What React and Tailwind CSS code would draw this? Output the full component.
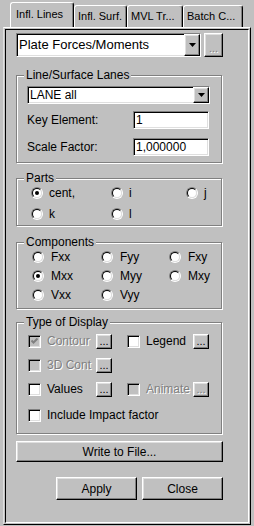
import React from 'react'

const raised =
  'border border-t-white border-l-white border-r-black border-b-black shadow-[inset_-1px_-1px_#808080,inset_1px_1px_#dfdfdf]'
const sunken =
  'border border-t-[#808080] border-l-[#808080] border-r-white border-b-white shadow-[inset_1px_1px_#000,inset_-1px_-1px_#dfdfdf]'
const grayText = 'text-[#808080] [text-shadow:1px_1px_0_#fff]'

function Group({ title, className = '', children }) {
  return (
    <div className={`relative w-[206px] border border-[#808080] shadow-[inset_1px_1px_#fff,1px_1px_#fff] ${className}`}>
      <span className="absolute -top-[8px] left-[7px] bg-[#c0c0c0] px-[2px] leading-[15px]">{title}</span>
      {children}
    </div>
  )
}

function Arrow() {
  return (
    <span className={`flex h-full w-[16px] shrink-0 items-center justify-center bg-[#c0c0c0] ${raised}`}>
      <svg width="7" height="4" viewBox="0 0 7 4">
        <path d="M0 0h7L3.5 4z" fill="#000" />
      </svg>
    </span>
  )
}

function Combo({ text, className }) {
  return (
    <div className={`flex items-stretch bg-white ${sunken} ${className}`}>
      <span className="flex flex-1 items-center pl-[2px]">{text}</span>
      <Arrow />
    </div>
  )
}

function Radio({ checked }) {
  return (
    <span className="block h-[12px] w-[12px] shrink-0 rounded-full border border-t-[#808080] border-l-[#808080] border-r-white border-b-white">
      <span className="flex h-full w-full items-center justify-center rounded-full border border-t-black border-l-black border-r-[#dfdfdf] border-b-[#dfdfdf] bg-white">
        {checked && <span className="block h-[4px] w-[4px] rounded-full bg-black" />}
      </span>
    </span>
  )
}

function Check({ checked, disabled }) {
  return (
    <span className={`flex h-[13px] w-[13px] shrink-0 items-center justify-center ${sunken} ${disabled ? 'bg-[#c0c0c0]' : 'bg-white'}`}>
      {checked && (
        <svg width="7" height="7" viewBox="0 0 7 7">
          <path d="M0.5 2.5 L2.5 4.5 L6.5 0.5" stroke={disabled ? '#808080' : '#000'} strokeWidth="2" fill="none" />
        </svg>
      )}
    </span>
  )
}

function Dots({ disabled }) {
  return (
    <span className={`flex h-[15px] w-[16px] shrink-0 items-end justify-center bg-[#c0c0c0] pb-[1px] text-[11px] leading-[11px] ${raised} ${disabled ? grayText : ''}`}>
      ...
    </span>
  )
}

function Opt({ label, checked, disabled, w }) {
  return (
    <span className={`flex items-center gap-[6px] ${w}`}>
      <Check checked={checked} disabled={disabled} />
      <span className={disabled ? grayText : ''}>{label}</span>
    </span>
  )
}

const tabs = [
  { label: 'Infl. Lines', w: 'w-[64px]' },
  { label: 'Infl. Surf.', w: 'w-[53px]' },
  { label: 'MVL Tr...', w: 'w-[56px]' },
  { label: 'Batch C...', w: 'w-[60px]' },
]

const parts = [
  ['cent,', true],
  ['i', false],
  ['j', false],
  ['k', false],
  ['l', false],
]

const comps = ['Fxx', 'Fyy', 'Fxy', 'Mxx', 'Myy', 'Mxy', 'Vxx', 'Vyy']

export default function App() {
  return (
    <div className="h-[526px] w-[254px] overflow-hidden bg-[#c0c0c0] font-['Liberation_Sans',Arial,sans-serif] text-[12px] leading-[16px] text-black">
      {/* tab strip */}
      <div className="flex h-[27px] items-end pl-[10px]">
        {tabs.map((t, i) => (
          <div
            key={t.label}
            className={`${t.w} ${i === 0 ? 'h-[25px] pl-[5px] pt-[4px]' : 'h-[22px] pl-[3px] pt-[3px]'} rounded-t-[3px] border-l border-t border-r border-l-white border-t-white border-r-black text-[11px] leading-[14px] shadow-[inset_-1px_0_#808080]`}
          >
            {t.label}
          </div>
        ))}
      </div>

      {/* page */}
      <div className="ml-[3px] h-[498px] w-[248px] border border-t-white border-l-[#dfdfdf] border-r-black border-b-black p-px">
        <div className="h-full border border-t-black border-l-black border-r-white border-b-white pl-[10px] pt-[3px]">
          <div className="flex h-[24px] gap-[3px]">
            <Combo text="Plate Forces/Moments" className="w-[185px] text-[13px]" />
            <span className={`flex w-[19px] items-end justify-center pb-[2px] text-[11px] leading-[11px] ${raised} ${grayText}`}>...</span>
          </div>

          <Group title="Line/Surface Lanes" className="mt-[18px] pb-[6px] pl-[10px] pt-[10px]">
            <Combo text="LANE all" className="h-[18px] w-[183px]" />
            <div className="mt-[7px] flex items-center">
              <span className="w-[106px]">Key Element:</span>
              <span className={`flex h-[18px] w-[76px] items-center bg-white pl-[2px] ${sunken}`}>1</span>
            </div>
            <div className="mt-[9px] flex items-center">
              <span className="w-[106px]">Scale Factor:</span>
              <span className={`flex h-[18px] w-[76px] items-center bg-white pl-[2px] ${sunken}`}>1,000000</span>
            </div>
          </Group>

          <Group title="Parts" className="mt-[15px] pb-[3px] pl-[14px] pt-[6px]">
            <div className="grid grid-cols-[80px_75px_auto] gap-y-[5px]">
              {parts.map(([l, c]) => (
                <span key={l} className="flex h-[16px] items-center gap-[6px]">
                  <Radio checked={c} />
                  {l}
                </span>
              ))}
            </div>
          </Group>

          <Group title="Components" className="mt-[16px] pb-[5px] pl-[15px] pt-[6px]">
            <div className="grid grid-cols-[69px_68px_auto] gap-y-[3px]">
              {comps.map(l => (
                <span key={l} className="flex h-[16px] items-center gap-[7px]">
                  <Radio checked={l === 'Mxx'} />
                  {l}
                </span>
              ))}
            </div>
          </Group>

          <Group title="Type of Display" className="mt-[13px] pb-[10px] pl-[11px] pt-[10px]">
            <div className="flex h-[16px] items-center">
              <Opt label="Contour" checked disabled w="w-[68px]" />
              <Dots />
              <span className="w-[15px]" />
              <Opt label="Legend" w="w-[66px]" />
              <Dots />
            </div>
            <div className="mt-[8px] flex h-[16px] items-center">
              <Opt label="3D Cont" disabled w="w-[68px]" />
              <Dots />
            </div>
            <div className="mt-[8px] flex h-[16px] items-center">
              <Opt label="Values" w="w-[68px]" />
              <Dots />
              <span className="w-[15px]" />
              <Opt label="Animate" disabled w="w-[66px]" />
              <Dots disabled />
            </div>
            <div className="mt-[10px] flex h-[16px] items-center">
              <Opt label="Include Impact factor" />
            </div>
          </Group>

          <button className={`mt-[7px] flex h-[21px] w-[207px] items-center justify-center ${raised}`}>Write to File...</button>

          <div className="mt-[15px] flex w-[207px] justify-end gap-[5px]">
            <button className={`flex h-[23px] w-[81px] items-center justify-center ${raised}`}>Apply</button>
            <button className={`flex h-[23px] w-[81px] items-center justify-center ${raised}`}>Close</button>
          </div>
        </div>
      </div>
    </div>
  )
}
